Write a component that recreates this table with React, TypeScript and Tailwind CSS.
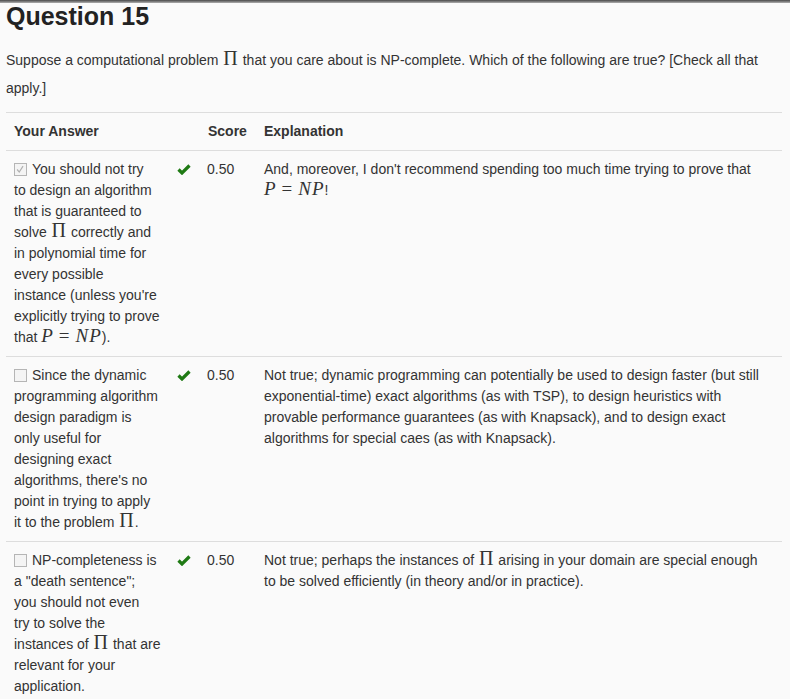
const Pi = () => (
  <span className="font-['Liberation_Serif',serif] text-[20px] leading-[0] mx-[1px]">Π</span>
);

const PeqNP = () => (
  <span className="font-['Liberation_Serif',serif] text-[19px] leading-[0]">
    <i>P</i>
    <span className="mx-[6px]">=</span>
    <i className="tracking-[1px]">NP</i>
  </span>
);

const Box: React.FC<{ checked?: boolean }> = ({ checked }) => (
  <span className="inline-block align-[-2px] w-[13px] h-[13px] mr-[5px] border border-[#b5b5b5] bg-[#f4f4f4] relative">
    {checked && (
      <svg viewBox="0 0 13 13" className="absolute left-0 top-0 w-[11px] h-[11px]">
        <path d="M2.5 6.5 L5 9.5 L9.5 2.5" fill="none" stroke="#b0b0b0" strokeWidth="1.4" />
      </svg>
    )}
  </span>
);

const Tick = () => (
  <svg viewBox="0 0 14 11" className="w-[14px] h-[11px] mt-[5px]">
    <path d="M1.5 5.5 L5 9 L12.5 1.5" fill="none" stroke="#1f7a14" strokeWidth="3.2" />
  </svg>
);

interface Row {
  answer: React.ReactNode;
  explanation: React.ReactNode;
}

// line breaks follow the original wrapping
const rows: Row[] = [
  {
    answer: (
      <>
        <Box checked />
        You should not try<br />
        to design an algorithm<br />
        that is guaranteed to<br />
        solve <Pi /> correctly and<br />
        in polynomial time for<br />
        every possible<br />
        instance (unless you're<br />
        explicitly trying to prove<br />
        that <PeqNP />).
      </>
    ),
    explanation: (
      <>
        And, moreover, I don't recommend spending too much time trying to prove that<br />
        <PeqNP />!
      </>
    ),
  },
  {
    answer: (
      <>
        <Box />
        Since the dynamic<br />
        programming algorithm<br />
        design paradigm is<br />
        only useful for<br />
        designing exact<br />
        algorithms, there's no<br />
        point in trying to apply<br />
        it to the problem <Pi />.
      </>
    ),
    explanation: (
      <>
        Not true; dynamic programming can potentially be used to design faster (but still<br />
        exponential-time) exact algorithms (as with TSP), to design heuristics with<br />
        provable performance guarantees (as with Knapsack), and to design exact<br />
        algorithms for special caes (as with Knapsack).
      </>
    ),
  },
  {
    answer: (
      <>
        <Box />
        NP-completeness is<br />
        a "death sentence";<br />
        you should not even<br />
        try to solve the<br />
        instances of <Pi /> that are<br />
        relevant for your<br />
        application.
      </>
    ),
    explanation: (
      <>
        Not true; perhaps the instances of <Pi /> arising in your domain are special enough<br />
        to be solved efficiently (in theory and/or in practice).
      </>
    ),
  },
];

export default function App() {
  return (
    <div className="min-h-[699px] bg-[#fafafa] text-[#333] font-['Liberation_Sans',Arial,sans-serif]">
      <div className="h-[3px] bg-gradient-to-b from-[#4a4a4a] to-[#b0b0b0]" />
      <div className="px-[6px] pr-[8px]">
        <h2 className="text-[25px] leading-[27px] font-bold text-[#222]">Question 15</h2>
        <p className="mt-[16px] mb-[10px] text-[14px] leading-[28px]">
          Suppose a computational problem <Pi /> that you care about is NP-complete. Which of the following are true?
          [Check all that apply.]
        </p>
        <table className="w-full table-fixed border-collapse text-[14px] leading-[21px]">
          <colgroup>
            <col className="w-[166px]" />
            <col className="w-[27px]" />
            <col className="w-[57px]" />
            <col />
          </colgroup>
          <thead>
            <tr>
              <th className="border-t border-[#ddd] px-2 py-2 text-left font-bold">Your Answer</th>
              <th className="border-t border-[#ddd]" />
              <th className="border-t border-[#ddd] pl-[9px] py-2 text-left font-bold">Score</th>
              <th className="border-t border-[#ddd] px-2 py-2 text-left font-bold">Explanation</th>
            </tr>
          </thead>
          <tbody>
            {rows.map((row, i) => (
              <tr key={i}>
                <td className="border-t border-[#ddd] px-2 py-2 align-top whitespace-nowrap">{row.answer}</td>
                <td className="border-t border-[#ddd] pl-[5px] py-2 align-top">
                  <Tick />
                </td>
                <td className="border-t border-[#ddd] pl-2 py-2 align-top">0.50</td>
                <td className="border-t border-[#ddd] px-2 py-2 align-top whitespace-nowrap">{row.explanation}</td>
              </tr>
            ))}
          </tbody>
        </table>
      </div>
    </div>
  );
}
